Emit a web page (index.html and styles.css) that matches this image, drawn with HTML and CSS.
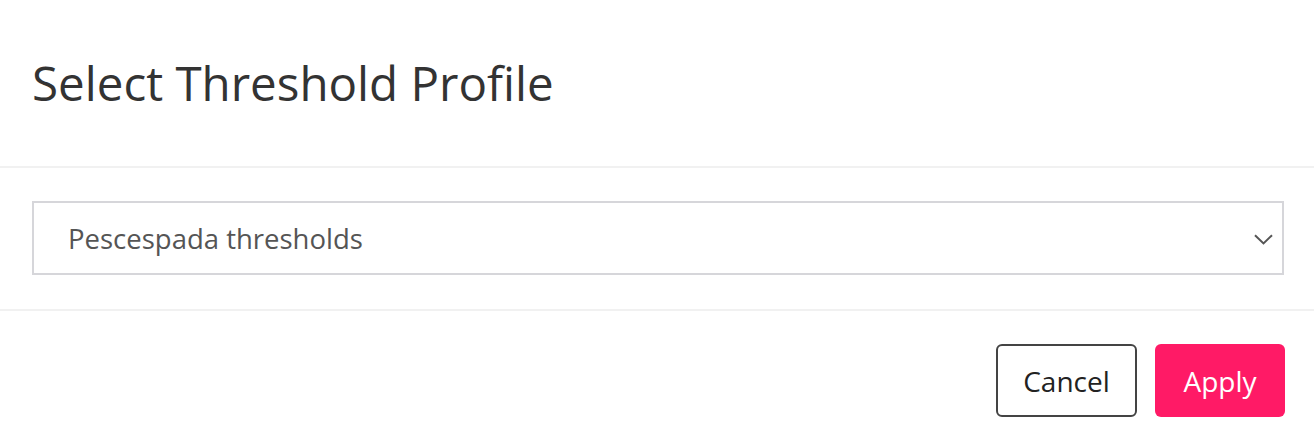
FILE: index.html
```html
<!DOCTYPE html>
<html>
<head>
<meta charset="utf-8">
<link rel="stylesheet" href="styles.css">
</head>
<body>
<div class="modal">
  <div class="modal-header">
    <h1 class="title">Select Threshold Profile</h1>
  </div>
  <div class="modal-body">
    <div class="select">
      <span class="select-value">Pescespada thresholds</span>
      <svg class="chevron" width="19" height="11" viewBox="0 0 19 11"><path d="M1 1.2 L9.5 9.4 L18 1.2" fill="none" stroke="#555" stroke-width="2"/></svg>
    </div>
  </div>
  <div class="modal-footer">
    <button class="btn btn-cancel">Cancel</button>
    <button class="btn btn-apply">Apply</button>
  </div>
</div>
</body>
</html>
```
FILE: styles.css
```css
html, body {
  margin: 0;
  padding: 0;
  background: #fff;
}
body {
  font-family: "Open Sans", "Noto Sans", sans-serif;
  width: 1314px;
  height: 448px;
  overflow: hidden;
}
.modal-header {
  height: 168px;
  border-bottom: 2px solid #f1f1f1;
  box-sizing: border-box;
  padding: 0 32px 2px;
  display: flex;
  align-items: center;
}
.title {
  margin: 0;
  font-size: 47.5px;
  font-weight: 400;
  color: #333;
}
.modal-body {
  padding: 33px 30px 34px 32px;
  border-bottom: 2px solid #f1f1f1;
}
.select {
  height: 74px;
  box-sizing: border-box;
  border: 2px solid #d6d6da;
  display: flex;
  align-items: center;
  justify-content: space-between;
  padding: 0 9px 0 34px;
}
.select-value {
  font-size: 27.5px;
  color: #555;
}
.chevron {
  display: block;
  margin-top: 3px;
}
.modal-footer {
  display: flex;
  justify-content: flex-end;
  gap: 18px;
  padding: 33px 29px 0 32px;
}
.btn {
  height: 73px;
  box-sizing: border-box;
  border-radius: 6px;
  font-family: "Open Sans", "Noto Sans", sans-serif;
  font-size: 28px;
  padding: 0;
  cursor: pointer;
}
.btn-cancel {
  width: 141px;
  background: #fff;
  color: #222;
  border: 2px solid #444;
}
.btn-apply {
  width: 130px;
  background: #ff1a66;
  color: #fff;
  border: none;
}
```
